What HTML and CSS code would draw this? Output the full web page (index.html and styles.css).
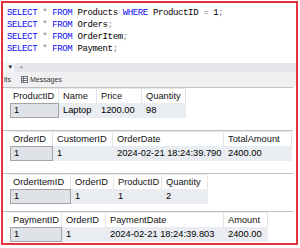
FILE: index.html
```html
<!DOCTYPE html>
<html>
<head>
<meta charset="utf-8">
<link rel="stylesheet" href="styles.css">
</head>
<body>
<div class="frame">
  <div class="editor">
    <div class="line"><span class="kw">SELECT</span> <span class="op">*</span> <span class="kw">FROM</span> Products <span class="kw">WHERE</span> ProductID <span class="op">=</span> 1<span class="op">;</span></div>
    <div class="line"><span class="kw">SELECT</span> <span class="op">*</span> <span class="kw">FROM</span> Orders<span class="op">;</span></div>
    <div class="line"><span class="kw">SELECT</span> <span class="op">*</span> <span class="kw">FROM</span> OrderItem<span class="op">;</span></div>
    <div class="line"><span class="kw">SELECT</span> <span class="op">*</span> <span class="kw">FROM</span> Payment<span class="op">;</span></div>
  </div>
  <div class="toolbar">
    <span class="combo">▾</span>
    <span class="scroll-left">◂</span>
  </div>
  <div class="tabs">
    <span class="tab">lts</span>
    <span class="tab msg">
      <svg class="msg-icon" width="7" height="7" viewBox="0 0 7 7"><rect x="0.5" y="0.5" width="6" height="6" fill="#fff" stroke="#6a7480"/><path d="M0.5 2.5H6.5M0.5 4.5H6.5M2.5 0.5V6.5" stroke="#6a7480" stroke-width="1"/></svg>
      Messages
    </span>
  </div>
  <div class="results">
    <div class="result r1">
      <div class="grid g1">
        <div class="rh"></div><div class="hc">ProductID</div><div class="hc">Name</div><div class="hc">Price</div><div class="hc">Quantity</div>
        <div class="rh"></div><div class="dc sel">1</div><div class="dc">Laptop</div><div class="dc">1200.00</div><div class="dc">98</div>
      </div>
    </div>
    <div class="result r2">
      <div class="grid g2">
        <div class="rh"></div><div class="hc">OrderID</div><div class="hc">CustomerID</div><div class="hc">OrderDate</div><div class="hc">TotalAmount</div>
        <div class="rh"></div><div class="dc sel">1</div><div class="dc">1</div><div class="dc">2024-02-21 18:24:39.790</div><div class="dc">2400.00</div>
      </div>
    </div>
    <div class="result r3">
      <div class="grid g3">
        <div class="rh"></div><div class="hc">OrderItemID</div><div class="hc">OrderID</div><div class="hc">ProductID</div><div class="hc">Quantity</div>
        <div class="rh"></div><div class="dc sel">1</div><div class="dc">1</div><div class="dc">1</div><div class="dc">2</div>
      </div>
    </div>
    <div class="result r4">
      <div class="grid g4">
        <div class="rh"></div><div class="hc">PaymentID</div><div class="hc">OrderID</div><div class="hc">PaymentDate</div><div class="hc">Amount</div>
        <div class="rh"></div><div class="dc sel">1</div><div class="dc">1</div><div class="dc">2024-02-21 18:24:39.803</div><div class="dc">2400.00</div>
      </div>
    </div>
  </div>
</div>
</body>
</html>
```
FILE: styles.css
```css
html, body {
  margin: 0;
  padding: 0;
  background: #ffffff;
}
.frame {
  margin: 1px;
  width: 297px;
  height: 244px;
  box-sizing: border-box;
  border: 2px solid #e5323a;
  display: flex;
  flex-direction: column;
  overflow: hidden;
  background: #ffffff;
}
.editor {
  height: 60px;
  flex: none;
  box-sizing: border-box;
  padding: 4px 0 0 4px;
  font-family: "Liberation Mono", monospace;
  font-size: 9px;
  letter-spacing: -0.37px;
  line-height: 12px;
  color: #000;
}
.line {
  white-space: pre;
  height: 12px;
}
.kw { color: #0c0cf2; }
.op { color: #808080; }
.toolbar {
  height: 9px;
  flex: none;
  background: #e6e6ec;
  display: flex;
  align-items: center;
  font-family: "DejaVu Sans", sans-serif;
  font-size: 7px;
  line-height: 9px;
}
.combo {
  width: 11px;
  height: 9px;
  background: #f4f4f6;
  color: #222;
  text-align: right;
  box-sizing: border-box;
  padding-right: 2px;
}
.scroll-left {
  margin-left: 5px;
  color: #b0b0b8;
}
.tabs {
  height: 15px;
  flex: none;
  background: #f0f0f2;
  display: flex;
  align-items: center;
  font-family: "Liberation Sans", sans-serif;
  font-size: 7px;
  color: #333;
}
.tab {
  display: flex;
  align-items: center;
}
.tab:first-child {
  padding-left: 1px;
  width: 17px;
}
.msg-icon {
  margin-right: 2px;
}
.results {
  display: flex;
  flex-direction: column;
}
.result {
  width: 290px;
  flex: none;
  border-top: 1px solid #c2c2c2;
}
.r2 { margin-top: 12px; }
.r3 { margin-top: 12px; }
.r4 { margin-top: 7px; }
.grid {
  display: grid;
  grid-auto-rows: 15px;
  justify-content: start;
  font-family: "Liberation Sans", sans-serif;
  font-size: 9.3px;
  line-height: 15px;
  color: #000;
}
.g1 { grid-template-columns: 6px 50px 38px 45px 44px; }
.g2 { grid-template-columns: 6px 44px 60px 111px 68px; }
.g3 { grid-template-columns: 6px 62px 43px 48px 46px; }
.g4 { grid-template-columns: 6px 53px 44px 118px 44px; }
.rh {
  background: #ffffff;
}
.hc {
  padding-left: 4px;
  border-right: 1px solid #e4e4e4;
  border-top: 1px solid #e8e8e8;
  line-height: 15px;
  white-space: nowrap;
  overflow: hidden;
  color: #111;
}
.dc {
  padding-left: 4px;
  background: #e9edf1;
  white-space: nowrap;
}
.dc.sel {
  background: #dfe3e8;
  border: 1px solid #a4a4a8;
  padding-left: 3px;
  line-height: 13px;
  margin-left: 1px;
}
```
